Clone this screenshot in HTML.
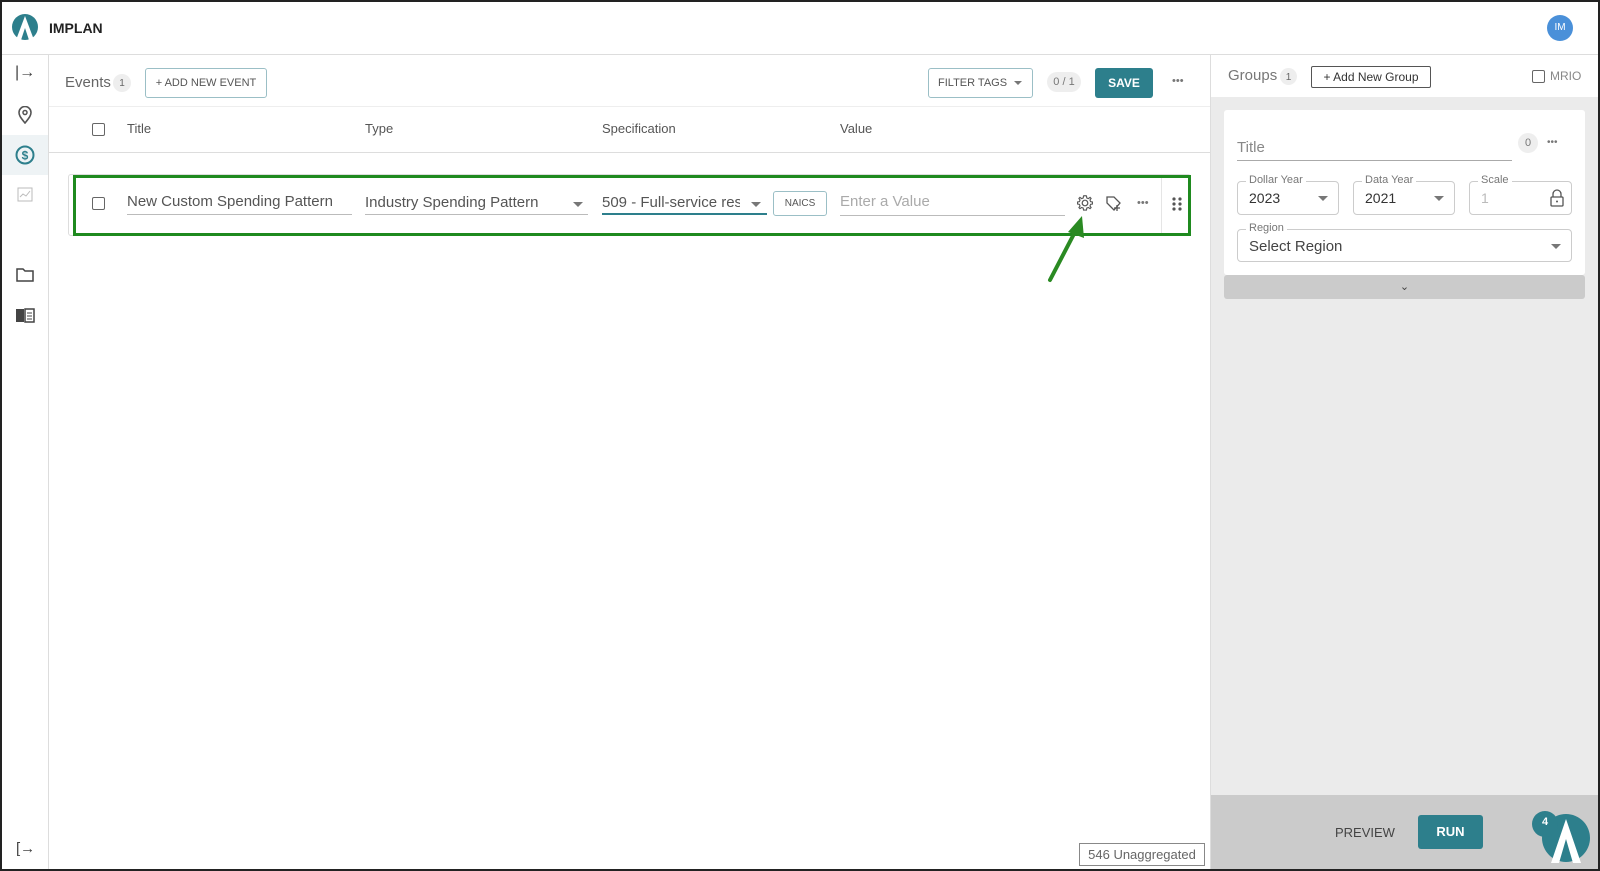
<!DOCTYPE html>
<html><head><meta charset="utf-8"><style>
*{box-sizing:border-box;margin:0;padding:0}
body{width:1600px;height:871px;position:relative;overflow:hidden;background:#fff;font-family:"Liberation Sans",sans-serif;color:#333}
.a{position:absolute}
.frame{position:absolute;left:0;top:0;width:1600px;height:871px;border:2px solid #222;pointer-events:none;z-index:50}
.cb{position:absolute;width:13px;height:13px;border:1.5px solid #666;border-radius:2px}
.t{position:absolute;white-space:nowrap}
.ul{position:absolute;height:1px;background:#bbb}
.dots{position:absolute;font-size:11px;color:#777;letter-spacing:0px}
.fs{position:absolute;border:1px solid #ccc;border-radius:4px;background:#fff}
.lg{position:absolute;font-size:11px;color:#777;background:#fff;padding:0 3px;top:-8px;left:8px}
.car{position:absolute;width:0;height:0;border-left:5px solid transparent;border-right:5px solid transparent;border-top:5px solid #777}
</style></head><body>
<div class="frame"></div>
<svg class="a" style="left:11px;top:13px" width="28" height="28" viewBox="0 0 28 28"><circle cx="14" cy="14" r="13" fill="#2d7f8c"/><path d="M14 3 L5 27 L10 27 L14 15 L18 27 L23 27 Z" fill="#fff"/></svg>
<div class="t" style="left:49px;top:20px;font-size:14px;font-weight:bold;color:#222">IMPLAN</div>
<div class="a" style="left:1547px;top:15px;width:26px;height:26px;border-radius:50%;background:#4a90d9;color:#fff;font-size:10px;text-align:center;line-height:26px">IM</div>
<div class="a" style="left:0;top:54px;width:1600px;height:1px;background:#ddd"></div>
<div class="a" style="left:48px;top:54px;width:1px;height:817px;background:#ddd"></div>
<div class="a" style="left:2px;top:135px;width:46px;height:40px;background:#eef3f5"></div>
<div class="t" style="left:15px;top:64px;font-size:16px;color:#444">|→</div>
<svg class="a" style="left:17px;top:106px" width="16" height="18" viewBox="0 0 16 18"><path d="M8 17 C3 11 2 9 2 6.5 A6 6 0 0 1 14 6.5 C14 9 13 11 8 17Z" fill="none" stroke="#555" stroke-width="1.6"/><circle cx="8" cy="6.5" r="2" fill="none" stroke="#555" stroke-width="1.5"/></svg>
<svg class="a" style="left:15px;top:145px" width="20" height="20" viewBox="0 0 20 20"><circle cx="10" cy="10" r="8.5" fill="none" stroke="#2d7f8c" stroke-width="2"/><text x="10" y="14.5" text-anchor="middle" font-size="12" font-weight="bold" fill="#2d7f8c" font-family="Liberation Sans">$</text></svg>
<svg class="a" style="left:17px;top:187px" width="16" height="15"><rect x="1" y="1" width="14" height="13" fill="none" stroke="#bbb"/><path d="M3 10 L6 7 L9 9 L13 4" stroke="#bbb" fill="none"/></svg>
<svg class="a" style="left:16px;top:267px" width="18" height="15"><path d="M1 2 H7 L9 4 H17 V14 H1 Z" fill="none" stroke="#444" stroke-width="1.5"/></svg>
<svg class="a" style="left:15px;top:307px" width="20" height="16"><path d="M1 2 H9 V15 H1 Z" fill="#444"/><path d="M10 2 H19 V15 H10 Z" fill="none" stroke="#444" stroke-width="1.5"/><path d="M12 6H17M12 9H17M12 12H17" stroke="#444"/></svg>
<div class="t" style="left:16px;top:840px;font-size:15px;color:#444">[→</div>
<div class="t" style="left:65px;top:74px;font-size:15px;color:#666">Events</div>
<div class="a" style="left:113px;top:74px;width:18px;height:18px;border-radius:50%;background:#eee;font-size:10px;color:#666;text-align:center;line-height:20px">1</div>
<div class="a" style="left:145px;top:68px;width:122px;height:30px;border:1px solid #9bbfc6;border-radius:3px;font-size:11px;color:#555;text-align:center;line-height:28px">+ ADD NEW EVENT</div>
<div class="a" style="left:928px;top:68px;width:105px;height:30px;border:1px solid #9bbfc6;border-radius:3px;font-size:11px;color:#555;line-height:28px;padding-left:9px">FILTER TAGS</div>
<div class="car" style="left:1014px;top:81px;border-width:4px 4px 0 4px"></div>
<div class="a" style="left:1047px;top:72px;width:34px;height:20px;border-radius:10px;background:#eee;font-size:11px;color:#777;text-align:center;line-height:20px">0 / 1</div>
<div class="a" style="left:1095px;top:68px;width:58px;height:30px;background:#2d7f8c;border-radius:3px;color:#fff;font-size:12px;font-weight:bold;text-align:center;line-height:30px">SAVE</div>
<div class="dots" style="left:1172px;top:75px">•••</div>
<div class="a" style="left:49px;top:106px;width:1161px;height:1px;background:#eee"></div>
<div class="cb" style="left:92px;top:123px"></div>
<div class="t" style="left:127px;top:121px;font-size:13px;color:#555">Title</div>
<div class="t" style="left:365px;top:121px;font-size:13px;color:#555">Type</div>
<div class="t" style="left:602px;top:121px;font-size:13px;color:#555">Specification</div>
<div class="t" style="left:840px;top:121px;font-size:13px;color:#555">Value</div>
<div class="a" style="left:49px;top:152px;width:1161px;height:1px;background:#ddd"></div>
<div class="a" style="left:68px;top:174px;width:1123px;height:62px;border:1px solid #ddd;border-radius:3px"></div>
<div class="a" style="left:73px;top:175px;width:1118px;height:61px;border:3px solid #1f8a1f"></div>
<div class="cb" style="left:92px;top:197px"></div>
<div class="t" style="left:127px;top:193px;font-size:15px;color:#555">New Custom Spending Pattern</div>
<div class="ul" style="left:127px;top:214px;width:225px"></div>
<div class="t" style="left:365px;top:194px;font-size:15px;color:#555">Industry Spending Pattern</div>
<div class="car" style="left:573px;top:202px"></div>
<div class="ul" style="left:365px;top:214px;width:223px"></div>
<div class="t" style="left:602px;top:194px;font-size:15px;color:#555;width:138px;overflow:hidden">509 - Full-service res</div>
<div class="car" style="left:751px;top:202px"></div>
<div class="ul" style="left:602px;top:213px;width:165px;height:2px;background:#2d7f8c"></div>
<div class="a" style="left:773px;top:191px;width:54px;height:25px;border:1px solid #9bbfc6;border-radius:3px;font-size:10px;color:#555;text-align:center;line-height:23px">NAICS</div>
<div class="t" style="left:840px;top:193px;font-size:15px;color:#aaa">Enter a Value</div>
<div class="ul" style="left:840px;top:215px;width:225px"></div>
<svg class="a" style="left:1076px;top:194px" width="18" height="18" viewBox="0 0 16 16"><circle cx="8" cy="8" r="2.5" fill="none" stroke="#555" stroke-width="1.1"/><path d="M8 1.5 L9.3 1.7 9.6 3.5 11 4.1 12.5 3 13.4 3.9 12.4 5.4 13 6.8 14.6 7.1 V8.9 L13 9.2 12.4 10.6 13.4 12.1 12.5 13 11 12 9.6 12.5 9.3 14.3 H6.7 L6.4 12.5 5 12 3.5 13 2.6 12.1 3.6 10.6 3 9.2 1.4 8.9 V7.1 L3 6.8 3.6 5.4 2.6 3.9 3.5 3 5 4.1 6.4 3.5 6.7 1.7Z" fill="none" stroke="#555" stroke-width="1"/></svg>
<svg class="a" style="left:1105px;top:195px" width="18" height="17" viewBox="0 0 18 17"><path d="M2 2 H9 L15 8 L9 15 L2 8 Z" fill="none" stroke="#555" stroke-width="1.3"/><path d="M12 10V16M9 13H15" stroke="#555" stroke-width="1.3"/></svg>
<div class="dots" style="left:1137px;top:197px">•••</div>
<div class="a" style="left:1161px;top:178px;width:1px;height:55px;background:#e5e5e5"></div>
<svg class="a" style="left:1172px;top:197px" width="10" height="14"><g fill="#555"><circle cx="2" cy="2" r="1.6"/><circle cx="8" cy="2" r="1.6"/><circle cx="2" cy="7" r="1.6"/><circle cx="8" cy="7" r="1.6"/><circle cx="2" cy="12" r="1.6"/><circle cx="8" cy="12" r="1.6"/></g></svg>
<svg class="a" style="left:1040px;top:210px" width="50" height="75"><path d="M10 70 L36 20" stroke="#2a8a22" stroke-width="4" stroke-linecap="round"/><path d="M42 6 L28 22 L44 28 Z" fill="#2a8a22"/></svg>
<div class="a" style="left:1079px;top:843px;width:126px;height:23px;border:1px solid #888;font-size:13px;color:#666;text-align:center;line-height:21px;background:#fff">546 Unaggregated</div>
<div class="a" style="left:1210px;top:54px;width:1px;height:817px;background:#ddd"></div>
<div class="a" style="left:1211px;top:97px;width:389px;height:698px;background:#ebebeb"></div>
<div class="a" style="left:1211px;top:795px;width:389px;height:76px;background:#cbcbcb"></div>
<div class="t" style="left:1228px;top:67px;font-size:15px;color:#777">Groups</div>
<div class="a" style="left:1280px;top:68px;width:17px;height:17px;border-radius:50%;background:#eee;font-size:10px;color:#666;text-align:center;line-height:19px">1</div>
<div class="a" style="left:1311px;top:66px;width:120px;height:22px;border:1px solid #555;border-radius:2px;font-size:12px;color:#333;text-align:center;line-height:20px">+ Add New Group</div>
<div class="cb" style="left:1532px;top:70px"></div>
<div class="t" style="left:1550px;top:69px;font-size:12px;color:#888">MRIO</div>
<div class="a" style="left:1224px;top:110px;width:361px;height:165px;background:#fff;border-radius:3px"></div>
<div class="t" style="left:1237px;top:139px;font-size:15px;color:#888">Title</div>
<div class="ul" style="left:1237px;top:160px;width:275px;background:#aaa"></div>
<div class="a" style="left:1518px;top:133px;width:20px;height:20px;border-radius:50%;background:#eee;font-size:11px;color:#777;text-align:center;line-height:20px">0</div>
<div class="dots" style="left:1547px;top:137px;font-size:10px">•••</div>
<div class="fs" style="left:1237px;top:181px;width:102px;height:34px"><span class="lg">Dollar Year</span><span class="t" style="left:11px;top:8px;font-size:14px;color:#333">2023</span><div class="car" style="left:80px;top:14px"></div></div>
<div class="fs" style="left:1353px;top:181px;width:102px;height:34px"><span class="lg">Data Year</span><span class="t" style="left:11px;top:8px;font-size:14px;color:#333">2021</span><div class="car" style="left:80px;top:14px"></div></div>
<div class="fs" style="left:1469px;top:181px;width:103px;height:34px"><span class="lg">Scale</span><span class="t" style="left:11px;top:8px;font-size:14px;color:#bbb">1</span>
<svg class="a" style="left:80px;top:7px" width="14" height="18"><path d="M3 8V5A4 4 0 0 1 11 5V8" fill="none" stroke="#555" stroke-width="1.3"/><rect x="1" y="8" width="12" height="9" rx="1" fill="none" stroke="#555" stroke-width="1.3"/><circle cx="7" cy="12.5" r="1" fill="#555"/></svg></div>
<div class="fs" style="left:1237px;top:229px;width:335px;height:33px"><span class="lg">Region</span><span class="t" style="left:11px;top:8px;font-size:15px;color:#444">Select Region</span><div class="car" style="left:313px;top:14px"></div></div>
<div class="a" style="left:1224px;top:275px;width:361px;height:24px;background:#cbcbcb;border-radius:3px;text-align:center;font-size:11px;color:#444;line-height:24px">⌄</div>
<div class="t" style="left:1335px;top:825px;font-size:13px;color:#444">PREVIEW</div>
<div class="a" style="left:1418px;top:815px;width:65px;height:34px;background:#2d7f8c;border-radius:3px;color:#fff;font-size:13px;font-weight:bold;text-align:center;line-height:34px">RUN</div>
<svg class="a" style="left:1541px;top:813px" width="50" height="50" viewBox="0 0 50 50"><circle cx="25" cy="25" r="24" fill="#2d7f8c"/><path d="M25 6 L10 50 L18 50 L25 26 L32 50 L40 50 Z" fill="#fff"/></svg>
<div class="a" style="left:1532px;top:811px;width:26px;height:26px;border-radius:50%;background:#2d7f8c;color:#fff;font-size:11px;font-weight:bold;text-align:center;line-height:22px">4</div>
</body></html>
